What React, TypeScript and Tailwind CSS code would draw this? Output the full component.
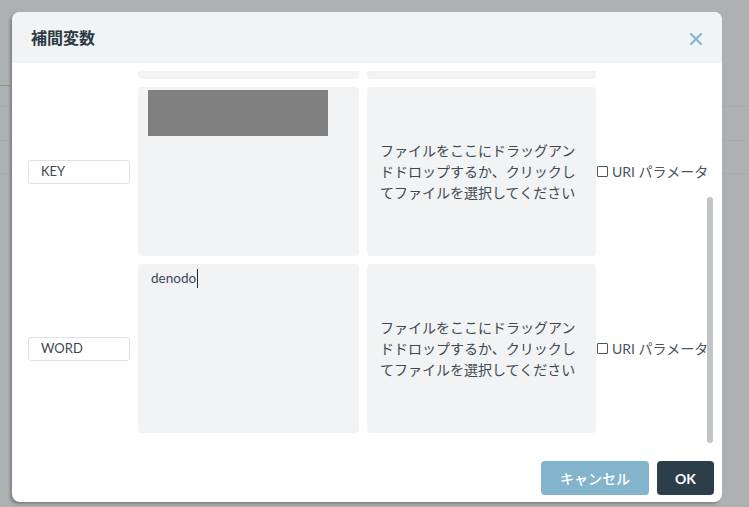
import React from "react";

const font = "font-['Lato','Noto_Sans_CJK_JP',sans-serif]";

const dropText = "ファイルをここにドラッグアンドドロップするか、クリックしてファイルを選択してください";

function ParamRow({
  name,
  value,
  masked,
  partial,
}: {
  name?: string;
  value?: string;
  masked?: boolean;
  partial?: boolean;
}) {
  return (
    <div className="flex items-center pl-[16px]">
      <div className="w-[102px] shrink-0">
        {!partial && (
          <div className="flex h-[24px] items-center rounded-[3px] border border-[#dfe2e5] bg-white pl-[12px] text-[13px] text-[#3d4852]">
            {name}
          </div>
        )}
      </div>
      <div className="relative ml-[8px] h-[169px] w-[221px] shrink-0 rounded-[4px] bg-[#f2f3f5] px-[13px] pt-[4px]">
        {masked && <div className="-ml-[3px] mt-[-1px] h-[46px] w-[180px] bg-[#808080]" />}
        {value && (
          <div className="flex items-center text-[13.5px] leading-[20px] text-[#3d4852]">
            <span>{value}</span>
            <span className="ml-[1px] h-[19px] w-[1px] bg-[#1f2a33]" />
          </div>
        )}
      </div>
      <div className="ml-[8px] flex h-[169px] w-[229px] shrink-0 items-center rounded-[4px] bg-[#f2f3f5] pl-[13px] pr-[12px]">
        {!partial && (
          <p className="text-[14px] leading-[21px] text-[#3d4852]">{dropText}</p>
        )}
      </div>
      {!partial && (
        <label className="ml-[1px] flex shrink-0 items-center whitespace-nowrap text-[14px] text-[#4a5560]">
          <span className="h-[11px] w-[11px] rounded-[1px] border-[1.5px] border-[#4a5560] bg-white" />
          <span className="ml-[4px]">URI パラメータ</span>
        </label>
      )}
    </div>
  );
}

export default function App() {
  return (
    <div className={`relative h-[507px] w-[749px] overflow-hidden bg-[#aeb1b2] ${font}`}>
      {/* page table behind the dialog */}
      <div className="flex flex-col pt-[85px]">
        <div className="h-[21px] w-[10px] border-t border-[#8e9395]" />
        <div className="h-[34px] border-t border-[#a7aaab]" />
        <div className="h-[33px] border-t border-[#a7aaab]" />
        <div className="h-[33px] border-t border-[#a7aaab]" />
      </div>

      {/* dialog */}
      <div className="absolute left-[12px] top-[12px] flex h-[490px] w-[710px] flex-col overflow-hidden rounded-[8px] bg-white shadow-[-2px_2px_3px_rgba(0,0,0,0.28)]">
        <div className="flex h-[51px] shrink-0 items-center justify-between bg-[#f2f3f5] pl-[19px] pr-[20px]">
          <h2 className="text-[16px] font-bold text-[#2c3a46]">補間変数</h2>
          <svg width="12" height="12" viewBox="0 0 12 12" className="mt-[2px]">
            <path d="M1 1 L11 11 M11 1 L1 11" stroke="#7fb4d2" strokeWidth="2" strokeLinecap="round" />
          </svg>
        </div>

        <div className="relative mt-[8px] h-[372px] shrink-0 overflow-hidden">
          <div className="-mt-[161px] flex flex-col gap-[8px]">
            <ParamRow partial />
            <ParamRow name="KEY" masked />
            <ParamRow name="WORD" value="denodo" />
          </div>
          <div className="absolute right-[9px] top-[126px] h-[246px] w-[6px] rounded-full bg-[#c1c4c6]" />
        </div>

        <div className="flex flex-1 items-start justify-end gap-[8px] pr-[8px] pt-[18px]">
          <button className="h-[34px] w-[108px] rounded-[4px] bg-[#84b4cc] text-[14px] font-medium text-white">
            キャンセル
          </button>
          <button className="h-[34px] w-[57px] rounded-[4px] bg-[#2c3e4a] text-[14px] font-bold text-white">
            OK
          </button>
        </div>
      </div>
    </div>
  );
}
